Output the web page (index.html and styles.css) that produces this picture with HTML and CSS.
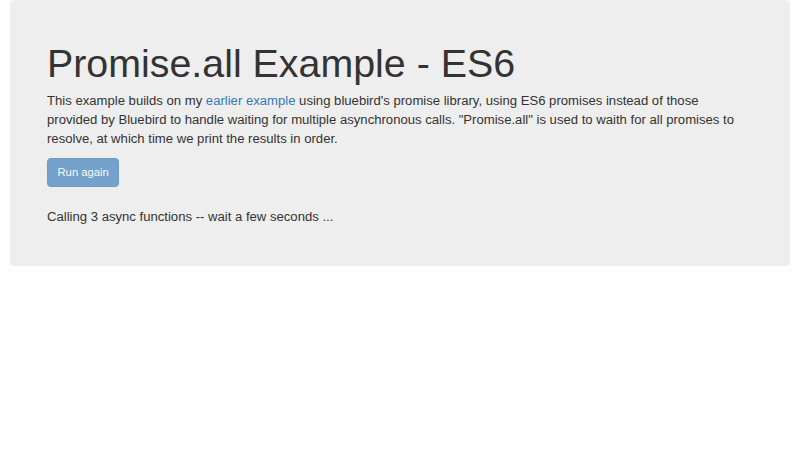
FILE: index.html
```html
<!DOCTYPE html>
<html>
<head>
<meta charset="utf-8">
<title>Promise.all Example - ES6</title>
<link rel="stylesheet" href="styles.css">
</head>
<body>
<div class="jumbotron">
  <h1 class="title">Promise.all Example - ES6</h1>
  <p class="lead">This example builds on my <a href="#" class="link">earlier example</a> using bluebird's promise library, using ES6 promises instead of those provided by Bluebird to handle waiting for multiple asynchronous calls. "Promise.all" is used to waith for all promises to resolve, at which time we print the results in order.</p>
  <div class="actions"><button class="btn" disabled>Run again</button></div>
  <p class="status">Calling 3 async functions -- wait a few seconds ...</p>
</div>
</body>
</html>
```
FILE: styles.css
```css
html, body {
  margin: 0;
  padding: 0;
  background: #fff;
}
body {
  font-family: "Liberation Sans", Arial, Helvetica, sans-serif;
  color: #333;
}
.jumbotron {
  margin: 0 10px;
  padding: 30px 39px 30px 37px;
  background: #eee;
  border-radius: 4px;
}
.title {
  margin: 11.7px 0 0;
  font-size: 39.375px;
  line-height: 43.3px;
  font-weight: 400;
  color: #333;
}
.lead {
  margin: 7.1px 0 0;
  font-size: 13.125px;
  line-height: 18.75px;
}
.link {
  color: #337ab7;
  text-decoration: none;
}
.actions {
  margin-top: 9.65px;
  display: flex;
}
.btn {
  font-family: "Liberation Sans", Arial, Helvetica, sans-serif;
  font-size: 11.25px;
  line-height: 15px;
  padding: 6.25px 9.5px;
  color: #fff;
  background: #337ab7;
  border: 1px solid #2e6da4;
  border-radius: 3.75px;
  opacity: 0.65;
  cursor: not-allowed;
}
.status {
  margin: 20.4px 0 9.4px;
  font-size: 13.125px;
  line-height: 18.75px;
}
```
